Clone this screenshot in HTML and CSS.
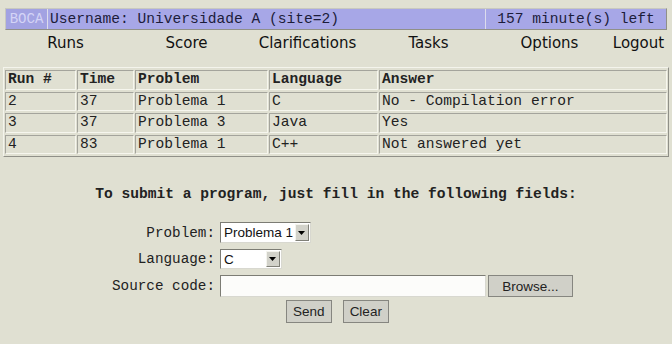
FILE: index.html
```html
<!DOCTYPE html>
<html>
<head>
<meta charset="utf-8">
<title>BOCA</title>
<link rel="stylesheet" href="styles.css">
</head>
<body>
<div class="topbar">
  <div class="cell brand">BOCA</div>
  <div class="cell user">Username: Universidade A (site=2)</div>
  <div class="cell time">157 minute(s) left</div>
</div>
<nav class="menu">
  <a>Runs</a><a>Score</a><a>Clarifications</a><a>Tasks</a><a>Options</a><a>Logout</a>
</nav>
<table class="runs">
  <colgroup><col class="c1"><col class="c2"><col class="c3"><col class="c4"><col class="c5"></colgroup>
  <tr><th>Run #</th><th>Time</th><th>Problem</th><th>Language</th><th>Answer</th></tr>
  <tr><td>2</td><td>37</td><td>Problema 1</td><td>C</td><td>No - Compilation error</td></tr>
  <tr><td>3</td><td>37</td><td>Problema 3</td><td>Java</td><td>Yes</td></tr>
  <tr><td>4</td><td>83</td><td>Problema 1</td><td>C++</td><td>Not answered yet</td></tr>
</table>
<p class="intro">To submit a program, just fill in the following fields:</p>
<div class="formwrap">
  <div class="form">
    <div class="label">Problem:</div>
    <div class="field"><span class="select sel-problem"><span class="val">Problema 1</span><span class="arrow"><svg width="7" height="4" viewBox="0 0 7 4"><path d="M0 0h7L3.5 4z" fill="#000"/></svg></span></span></div>
    <div class="label">Language:</div>
    <div class="field"><span class="select sel-lang"><span class="val">C</span><span class="arrow"><svg width="7" height="4" viewBox="0 0 7 4"><path d="M0 0h7L3.5 4z" fill="#000"/></svg></span></span></div>
    <div class="label">Source code:</div>
    <div class="field"><span class="textbox"></span><span class="btn browse">Browse...</span></div>
  </div>
</div>
<div class="actions">
  <span class="btn">Send</span><span class="btn">Clear</span>
</div>
</body>
</html>
```
FILE: styles.css
```css
body {
  margin: 0;
  background: #e0e0d2;
  font-family: "Liberation Mono", "Courier New", monospace;
  font-size: 14.6px;
  color: #222;
}

.topbar {
  display: grid;
  grid-template-columns: 41px 1fr 180px;
  column-gap: 1px;
  margin: 8px 5px 0;
  height: 22px;
  box-sizing: border-box;
  border: 1px solid;
  border-color: #c8c8c0 #909088 #909088 #c8c8c0;
  background: #dcdcec;
}
.cell {
  display: flex;
  align-items: center;
  background: #a7a7e7;
  color: #1c1c3a;
  white-space: nowrap;
}
.brand {
  background: #a2a2e2;
  color: #d4d4f6;
  justify-content: center;
  font-size: 14px;
}
.user { padding-left: 2px; }
.time { justify-content: center; }

.menu {
  display: grid;
  grid-template-columns: repeat(5, 1fr) 57px;
  margin: 4px 5px 0;
  font-family: "DejaVu Sans", Verdana, sans-serif;
  font-size: 15px;
  line-height: 18px;
  color: #111;
  text-align: center;
}

.runs {
  width: 666px;
  margin: 15px 3px 0;
  border-collapse: separate;
  border-spacing: 1px 2px;
  border: 1px solid;
  border-color: #f4f4ec #909088 #909088 #f4f4ec;
  table-layout: fixed;
}
.c1 { width: 71px; }
.c2 { width: 57px; }
.c3 { width: 133px; }
.c4 { width: 109px; }
.runs th, .runs td {
  border: 1px solid;
  border-color: #a4a49c #f6f6ee #f6f6ee #a4a49c;
  padding: 0 2px;
  line-height: 17.5px;
  text-align: left;
  white-space: nowrap;
  overflow: hidden;
}
.runs th { font-weight: bold; }
.runs td { font-weight: normal; }

.intro {
  margin: 28px 0 0;
  text-align: center;
  font-weight: bold;
  line-height: 18px;
}

.formwrap {
  display: flex;
  justify-content: center;
  padding-left: 13px;
  margin-top: 19px;
}
.form {
  display: grid;
  grid-template-columns: auto auto;
  column-gap: 5px;
  row-gap: 6px;
  align-items: center;
}
.label { text-align: right; white-space: nowrap; font-size: 14.3px; }
.field { display: flex; align-items: center; gap: 2px; }

.select {
  display: inline-flex;
  box-sizing: border-box;
  border: 1px solid;
  border-color: #7c7c74 #d8d8d0 #d8d8d0 #7c7c74;
  background: #fff;
  font-family: "Liberation Sans", Arial, sans-serif;
  font-size: 13.5px;
  color: #111;
}
.sel-problem { width: 91px; height: 21px; }
.sel-lang { width: 62px; height: 20px; }
.val {
  flex: 1;
  padding-left: 3px;
  display: flex;
  align-items: center;
  white-space: nowrap;
  overflow: hidden;
}
.arrow {
  width: 14px;
  margin: 1px;
  box-sizing: border-box;
  border: 1px solid;
  border-color: #f4f4ee #808078 #808078 #f4f4ee;
  background: #d2d2ca;
  display: flex;
  align-items: center;
  justify-content: center;
}

.textbox {
  display: block;
  width: 266px;
  height: 22px;
  box-sizing: border-box;
  border: 1px solid;
  border-color: #7c7c74 #d8d8d0 #d8d8d0 #7c7c74;
  background: #fcfcfa;
}

.btn {
  display: inline-flex;
  align-items: center;
  justify-content: center;
  box-sizing: border-box;
  height: 23px;
  padding: 0 6px;
  border: 1px solid #868680;
  background: #d0d0c8;
  font-family: "Liberation Sans", Arial, sans-serif;
  font-size: 13.5px;
  color: #222;
}
.browse { width: 85px; height: 22px; }

.actions {
  display: flex;
  justify-content: center;
  gap: 11px;
  margin-top: 3px;
  padding-left: 3px;
}
```
